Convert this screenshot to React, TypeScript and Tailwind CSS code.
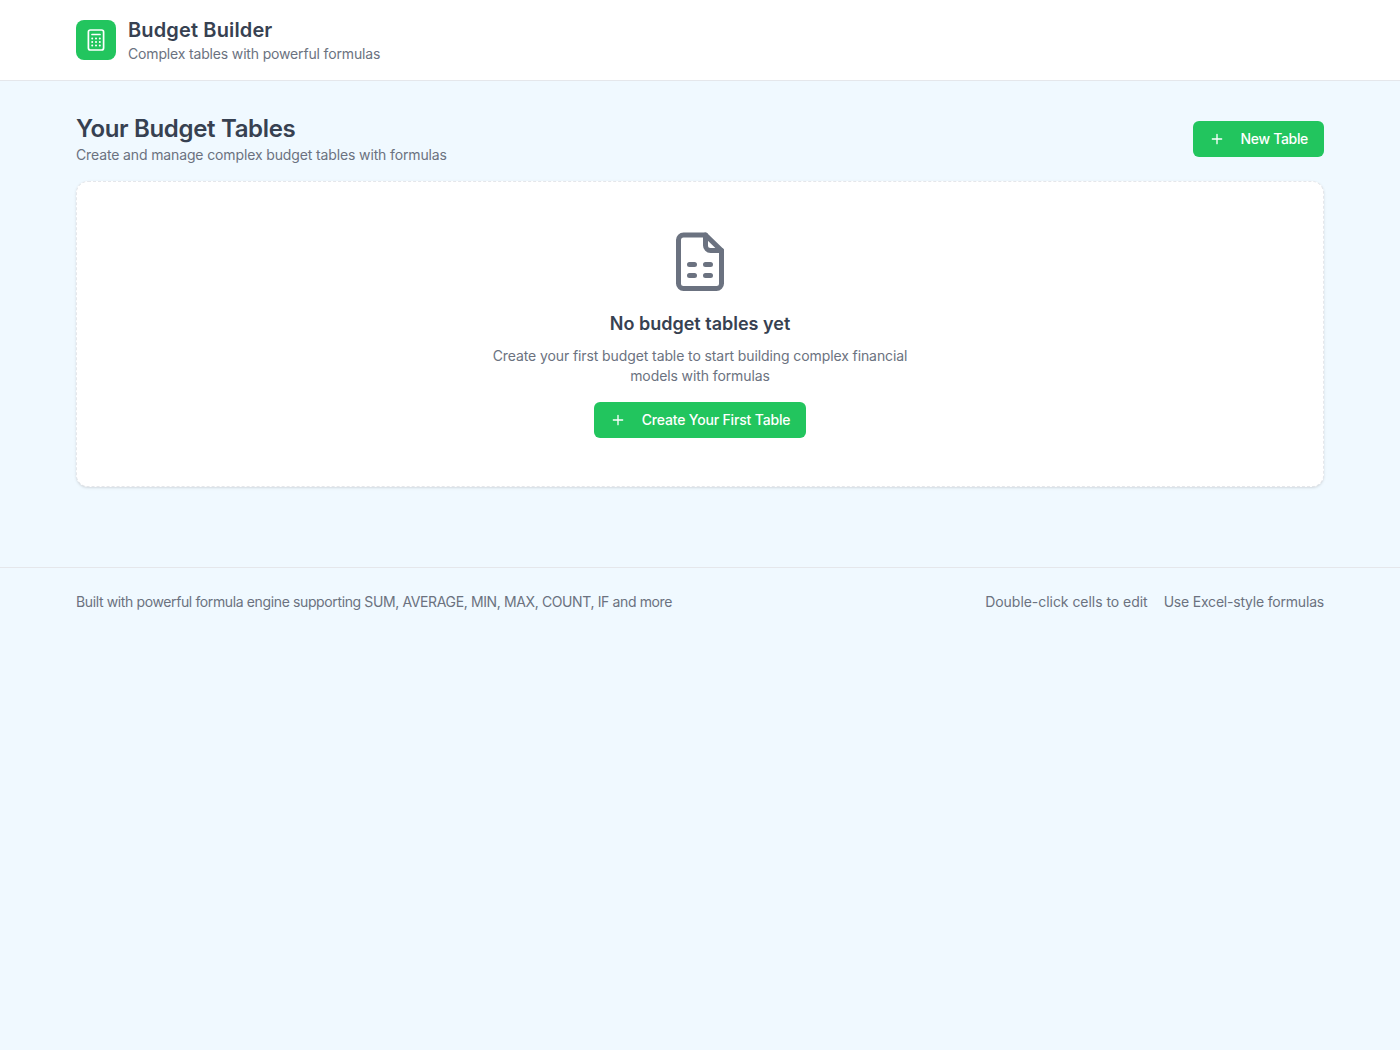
const FONT = "font-['Inter','Noto_Sans',sans-serif]";

const PlusIcon = () => (
  <svg className="w-4 h-4" viewBox="0 0 24 24" fill="none" stroke="currentColor" strokeWidth="2" strokeLinecap="round">
    <path d="M12 5v14M5 12h14" />
  </svg>
);

const CalcIcon = () => (
  <svg className="w-6 h-6" viewBox="0 0 24 24" fill="none" stroke="currentColor" strokeWidth="1.7" strokeLinecap="round" strokeLinejoin="round">
    <rect x="4.4" y="2" width="15.2" height="20" rx="2" />
    <path d="M8 6.5h8" />
    <path d="M8.2 10.5h.01M12 10.5h.01M15.8 10.5h.01M8.2 14h.01M12 14h.01M15.8 14h.01M8.2 17.5h.01M12 17.5h.01M15.8 17.5h.01" strokeWidth="2" />
  </svg>
);

const FileIcon = () => (
  <svg className="w-16 h-16 text-[#6b7280]" viewBox="0 0 64 64" fill="none" stroke="currentColor" strokeWidth="5" strokeLinecap="round" strokeLinejoin="round">
    <path d="M37.5 5H15.5a5 5 0 0 0-5 5v43.5a5 5 0 0 0 5 5h33a5 5 0 0 0 5-5V20.5z" />
    <path d="M37.5 5v10.5a5 5 0 0 0 5 5h11" />
    <path d="M21.5 34.5h5M37.5 34.5h5M21.5 45.5h5M37.5 45.5h5" />
  </svg>
);

const App = () => {
  return (
    <div className={`min-h-[1050px] bg-[#f0f9ff] text-[#374151] ${FONT}`}>
      <header className="h-[81px] bg-white border-b border-[#e5e7eb]">
        <div className="max-w-[1280px] mx-auto px-4 h-full flex items-center gap-3">
          <div className="w-10 h-10 rounded-lg bg-[#22c55e] text-white flex items-center justify-center">
            <CalcIcon />
          </div>
          <div>
            <h1 className="text-xl leading-7 font-semibold tracking-[0.14px]">Budget Builder</h1>
            <p className="text-sm leading-5 text-[#6b7280] tracking-[-0.16px]">Complex tables with powerful formulas</p>
          </div>
        </div>
      </header>

      <main className="max-w-[1280px] mx-auto px-4 pt-8 pb-20">
        <div className="flex items-center justify-between mb-4">
          <div>
            <h2 className="text-2xl leading-8 font-semibold tracking-[-0.33px]">Your Budget Tables</h2>
            <p className="text-sm leading-5 text-[#6b7280] tracking-[-0.13px]">Create and manage complex budget tables with formulas</p>
          </div>
          <button className="h-9 px-4 rounded-md bg-[#22c55e] text-white text-sm font-medium tracking-[-0.33px] flex items-center gap-4">
            <PlusIcon />
            New Table
          </button>
        </div>

        <div className="h-[306px] bg-white rounded-xl border border-dashed border-[#e5e7eb] shadow-sm flex flex-col items-center pt-[48px]">
          <FileIcon />
          <h3 className="mt-4 text-lg leading-7 font-semibold">No budget tables yet</h3>
          <p className="mt-2 w-[448px] text-sm leading-5 text-center text-[#6b7280] tracking-[-0.1px]">
            Create your first budget table to start building complex financial models with formulas
          </p>
          <button className="mt-4 h-9 px-4 rounded-md bg-[#22c55e] text-white text-sm font-medium tracking-[-0.17px] flex items-center gap-4">
            <PlusIcon />
            Create Your First Table
          </button>
        </div>
      </main>

      <footer className="border-t border-[#e5e7eb]">
        <div className="max-w-[1280px] mx-auto px-4 pt-6 flex justify-between text-sm leading-5 text-[#6b7280]">
          <span className="tracking-[-0.375px]">Built with powerful formula engine supporting SUM, AVERAGE, MIN, MAX, COUNT, IF and more</span>
          <div className="flex gap-4">
            <span className="tracking-[-0.04px]">Double-click cells to edit</span>
            <span className="tracking-[-0.2px]">Use Excel-style formulas</span>
          </div>
        </div>
      </footer>
    </div>
  );
};

export default App;
